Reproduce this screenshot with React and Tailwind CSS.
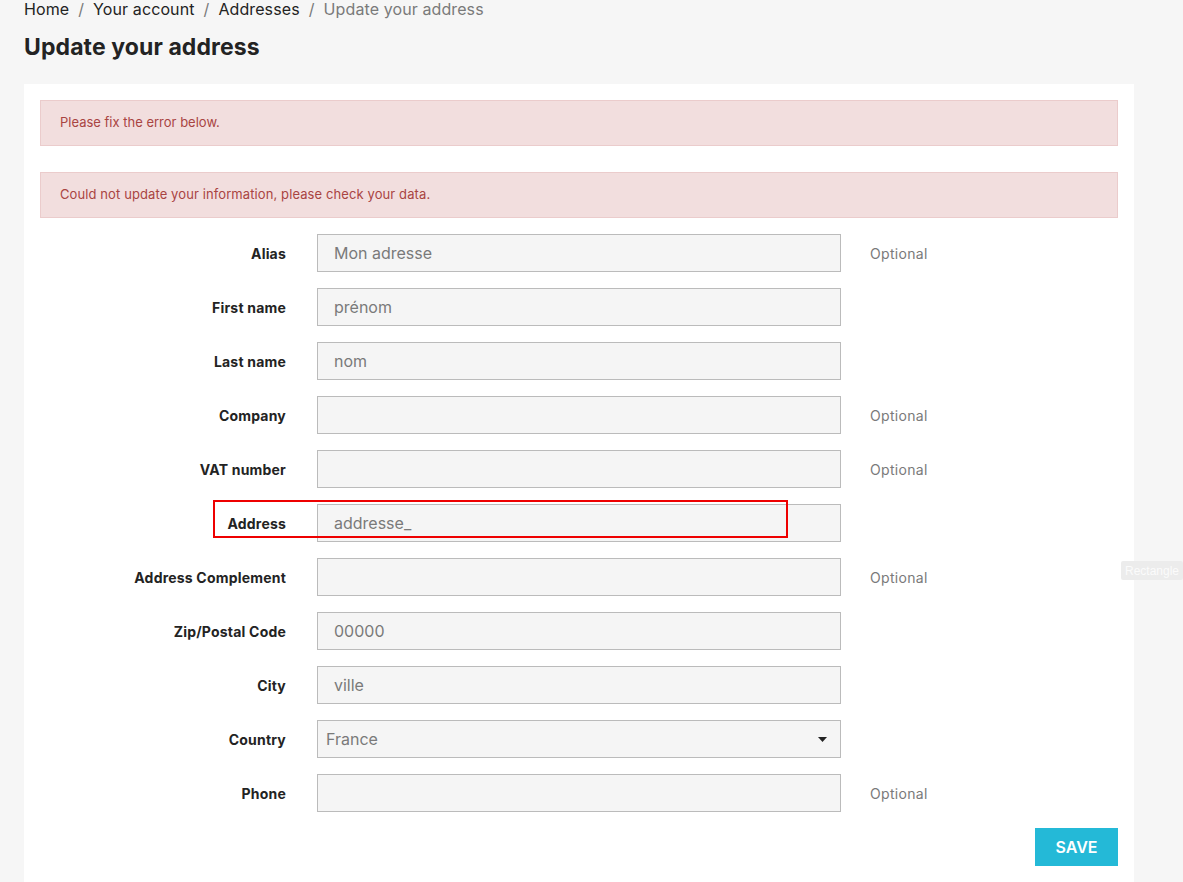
import React from "react";

const rows = [
  { label: "Alias", value: "Mon adresse", optional: true },
  { label: "First name", value: "prénom" },
  { label: "Last name", value: "nom" },
  { label: "Company", value: "", optional: true },
  { label: "VAT number", value: "", optional: true },
  { label: "Address", value: "addresse_" },
  { label: "Address Complement", value: "", optional: true },
  { label: "Zip/Postal Code", value: "00000" },
  { label: "City", value: "ville" },
  { label: "Country", value: "France", select: true },
  { label: "Phone", value: "", optional: true },
];

export default function App() {
  return (
    <div
      className="relative h-[882px] w-[1183px] overflow-hidden bg-[#f6f6f6] text-[#232323]"
      style={{ fontFamily: "Inter, 'Noto Sans', sans-serif" }}
    >
      <div className="pl-[24px]">
        <nav className="flex h-[18px] items-center text-[16px] leading-[18px] tracking-[0.1px]">
          <span>Home</span>
          <span className="mx-[9px] text-[#7a7a7a]">/</span>
          <span>Your account</span>
          <span className="mx-[9px] text-[#7a7a7a]">/</span>
          <span>Addresses</span>
          <span className="mx-[9px] text-[#7a7a7a]">/</span>
          <span className="text-[#7a7a7a]">Update your address</span>
        </nav>
        <h1 className="mt-[16px] text-[23px] font-bold leading-[26px] tracking-[0.1px]">
          Update your address
        </h1>
      </div>

      <div className="mt-[24px] ml-[24px] w-[1110px] h-[800px] bg-white px-4 pt-4">
        <div className="flex h-[46px] items-center border border-[#ebcccc] bg-[#f2dede] pl-[19px] text-[13px] text-[#a94442]">
          Please fix the error below.
        </div>
        <div className="mt-[26px] flex h-[46px] items-center border border-[#ebcccc] bg-[#f2dede] pl-[19px] text-[13px] tracking-[0.1px] text-[#a94442]">
          Could not update your information, please check your data.
        </div>

        <form className="mt-4">
          {rows.map((r) => (
            <div key={r.label} className="mb-4 flex h-[38px] items-center">
              <label className="w-[246px] text-right text-[14px] font-bold tracking-[0.2px] text-[#232323]">
                {r.label}
              </label>
              {r.select ? (
                <div className="ml-[31px] flex h-[38px] w-[524px] items-center justify-between border border-[#bbbbbb] bg-[#f5f5f5] pl-[8px] pr-[13px] text-[16px] text-[#7a7a7a]">
                  <span>{r.value}</span>
                  <svg width="9" height="5" viewBox="0 0 9 5">
                    <path d="M0 0h9L4.5 5z" fill="#232323" />
                  </svg>
                </div>
              ) : (
                <div className="ml-[31px] flex h-[38px] w-[524px] items-center border border-[#bbbbbb] bg-[#f5f5f5] pl-[16px] text-[16px] text-[#7a7a7a]">
                  {r.value}
                </div>
              )}
              {r.optional && (
                <span className="ml-[29px] text-[14px] tracking-[0.3px] text-[#7a7a7a]">Optional</span>
              )}
            </div>
          ))}
          <div className="flex justify-end">
            <button
              type="button"
              className="h-[38px] w-[83px] bg-[#24b9d7] text-[16px] font-semibold text-white"
            >
              SAVE
            </button>
          </div>
        </form>
      </div>

      <div className="absolute left-[213px] top-[500px] h-[38px] w-[575px] border-2 border-[#ee0000]" />
      <div
        className="absolute left-[1121px] top-[561px] flex h-[19px] w-[62px] items-center justify-center rounded-[2px] bg-[#ececec] text-[12px] text-[#fbfbfb]"
        style={{ fontFamily: "'Liberation Sans', Arial, sans-serif" }}
      >
        Rectangle
      </div>
    </div>
  );
}
